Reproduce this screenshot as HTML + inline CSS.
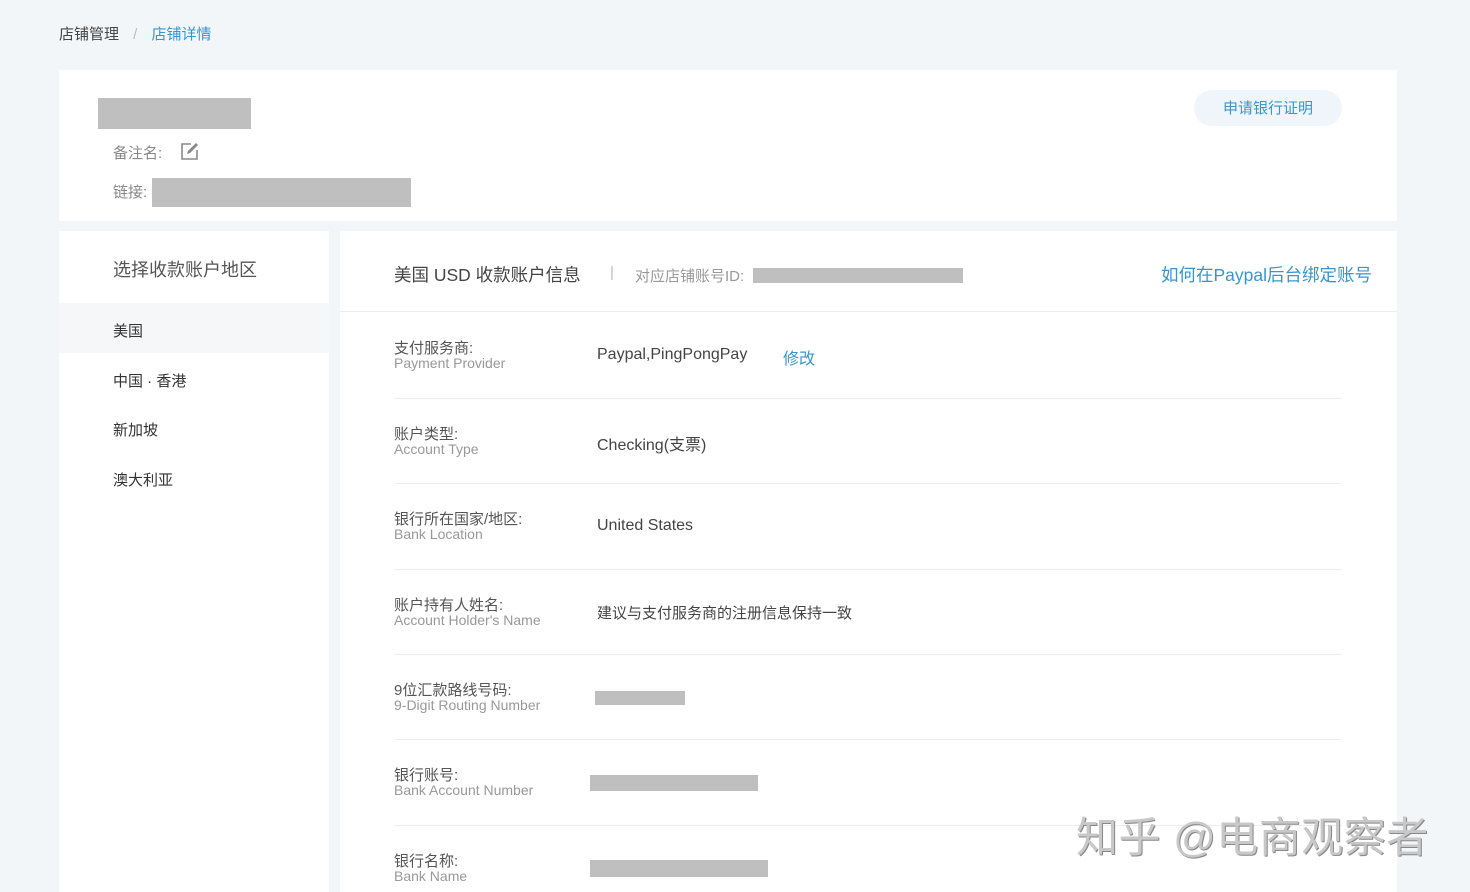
<!DOCTYPE html>
<html><head><meta charset="utf-8"><style>
*{margin:0;padding:0;box-sizing:border-box}
body{width:1470px;height:892px;overflow:hidden;background:#f3f6f9;font-family:"Liberation Sans","Noto Sans CJK SC",sans-serif;color:#333;position:relative}
.a{position:absolute}
.g{background:#bfbfbf;position:absolute}
.lab{position:absolute;left:394px;font-size:15px;color:#555;line-height:15px}
.lab small{display:block;font-size:14px;color:#999;line-height:15px}
.val{position:absolute;left:597px;font-size:16px;color:#444}
.sep{position:absolute;left:394px;width:948px;height:1px;background:#eceef0}
</style></head><body>
<div class="a" style="left:59px;top:23px;font-size:15px;color:#444">店铺管理 <span style="color:#bbb;margin:0 10px">/</span> <span style="color:#3a95cf">店铺详情</span></div>
<div class="a" style="left:59px;top:70px;width:1338px;height:151px;background:#fff"></div>
<div class="g" style="left:98px;top:98px;width:153px;height:31px"></div>
<div class="a" style="left:113px;top:142px;font-size:15px;color:#888">备注名:</div>
<svg class="a" style="left:180px;top:141px" width="20" height="20" viewBox="0 0 20 20"><path d="M11 3H2v15h15V9" fill="none" stroke="#888" stroke-width="1.6"/><path d="M7 13l1-3 8-8 2 2-8 8z" fill="#888"/></svg>
<div class="a" style="left:113px;top:181px;font-size:15px;color:#888">链接:</div>
<div class="g" style="left:152px;top:178px;width:259px;height:29px"></div>
<div class="a" style="left:1194px;top:90px;width:148px;height:36px;border-radius:18px;background:#f0f5f9;color:#3a95cf;font-size:15px;text-align:center;line-height:38px">申请银行证明</div>
<div class="a" style="left:59px;top:231px;width:270px;height:661px;background:#fff"></div>
<div class="a" style="left:113px;top:256px;font-size:18px;color:#555">选择收款账户地区</div>
<div class="a" style="left:59px;top:303px;width:270px;height:50px;background:#f6f7f9"></div>
<div class="a" style="left:113px;top:320px;font-size:15px;color:#333">美国</div>
<div class="a" style="left:113px;top:370px;font-size:15px;color:#333">中国 · 香港</div>
<div class="a" style="left:113px;top:419px;font-size:15px;color:#333">新加坡</div>
<div class="a" style="left:113px;top:469px;font-size:15px;color:#333">澳大利亚</div>
<div class="a" style="left:340px;top:231px;width:1057px;height:661px;background:#fff"></div>
<div class="a" style="left:394px;top:262px;font-size:17.5px;color:#444">美国 USD 收款账户信息</div>
<div class="a" style="left:610px;top:264px;font-size:15px;color:#bbb">|</div>
<div class="a" style="left:635px;top:265px;font-size:15px;color:#999">对应店铺账号ID:</div>
<div class="g" style="left:753px;top:268px;width:210px;height:15px"></div>
<div class="a" style="left:1161px;top:262px;font-size:17.5px;color:#3a95cf">如何在Paypal后台绑定账号</div>
<div class="a" style="left:340px;top:311px;width:1057px;height:1px;background:#eceef0"></div>
<div class="lab" style="top:341px">支付服务商:<small>Payment Provider</small></div>
<div class="val" style="top:346px">Paypal,PingPongPay</div>
<div class="a" style="left:783px;top:345px;font-size:16px;color:#3a95cf">修改</div>
<div class="sep" style="top:398px"></div>
<div class="lab" style="top:427px">账户类型:<small>Account Type</small></div>
<div class="val" style="top:431px">Checking(支票)</div>
<div class="sep" style="top:483px"></div>
<div class="lab" style="top:512px">银行所在国家/地区:<small>Bank Location</small></div>
<div class="val" style="top:517px">United States</div>
<div class="sep" style="top:569px"></div>
<div class="lab" style="top:598px">账户持有人姓名:<small>Account Holder's Name</small></div>
<div class="val" style="top:602px;font-size:15px">建议与支付服务商的注册信息保持一致</div>
<div class="sep" style="top:654px"></div>
<div class="lab" style="top:683px">9位汇款路线号码:<small>9-Digit Routing Number</small></div>
<div class="g" style="left:595px;top:691px;width:90px;height:14px"></div>
<div class="sep" style="top:739px"></div>
<div class="lab" style="top:768px">银行账号:<small>Bank Account Number</small></div>
<div class="g" style="left:590px;top:775px;width:168px;height:16px"></div>
<div class="sep" style="top:825px"></div>
<div class="lab" style="top:854px">银行名称:<small>Bank Name</small></div>
<div class="g" style="left:590px;top:860px;width:178px;height:17px"></div>
<div class="a" style="left:1076px;top:804px;font-size:42px;letter-spacing:0.5px;color:#c8c8c8;text-shadow:1px 1px 0 #888">知乎 @电商观察者</div>
</body></html>
